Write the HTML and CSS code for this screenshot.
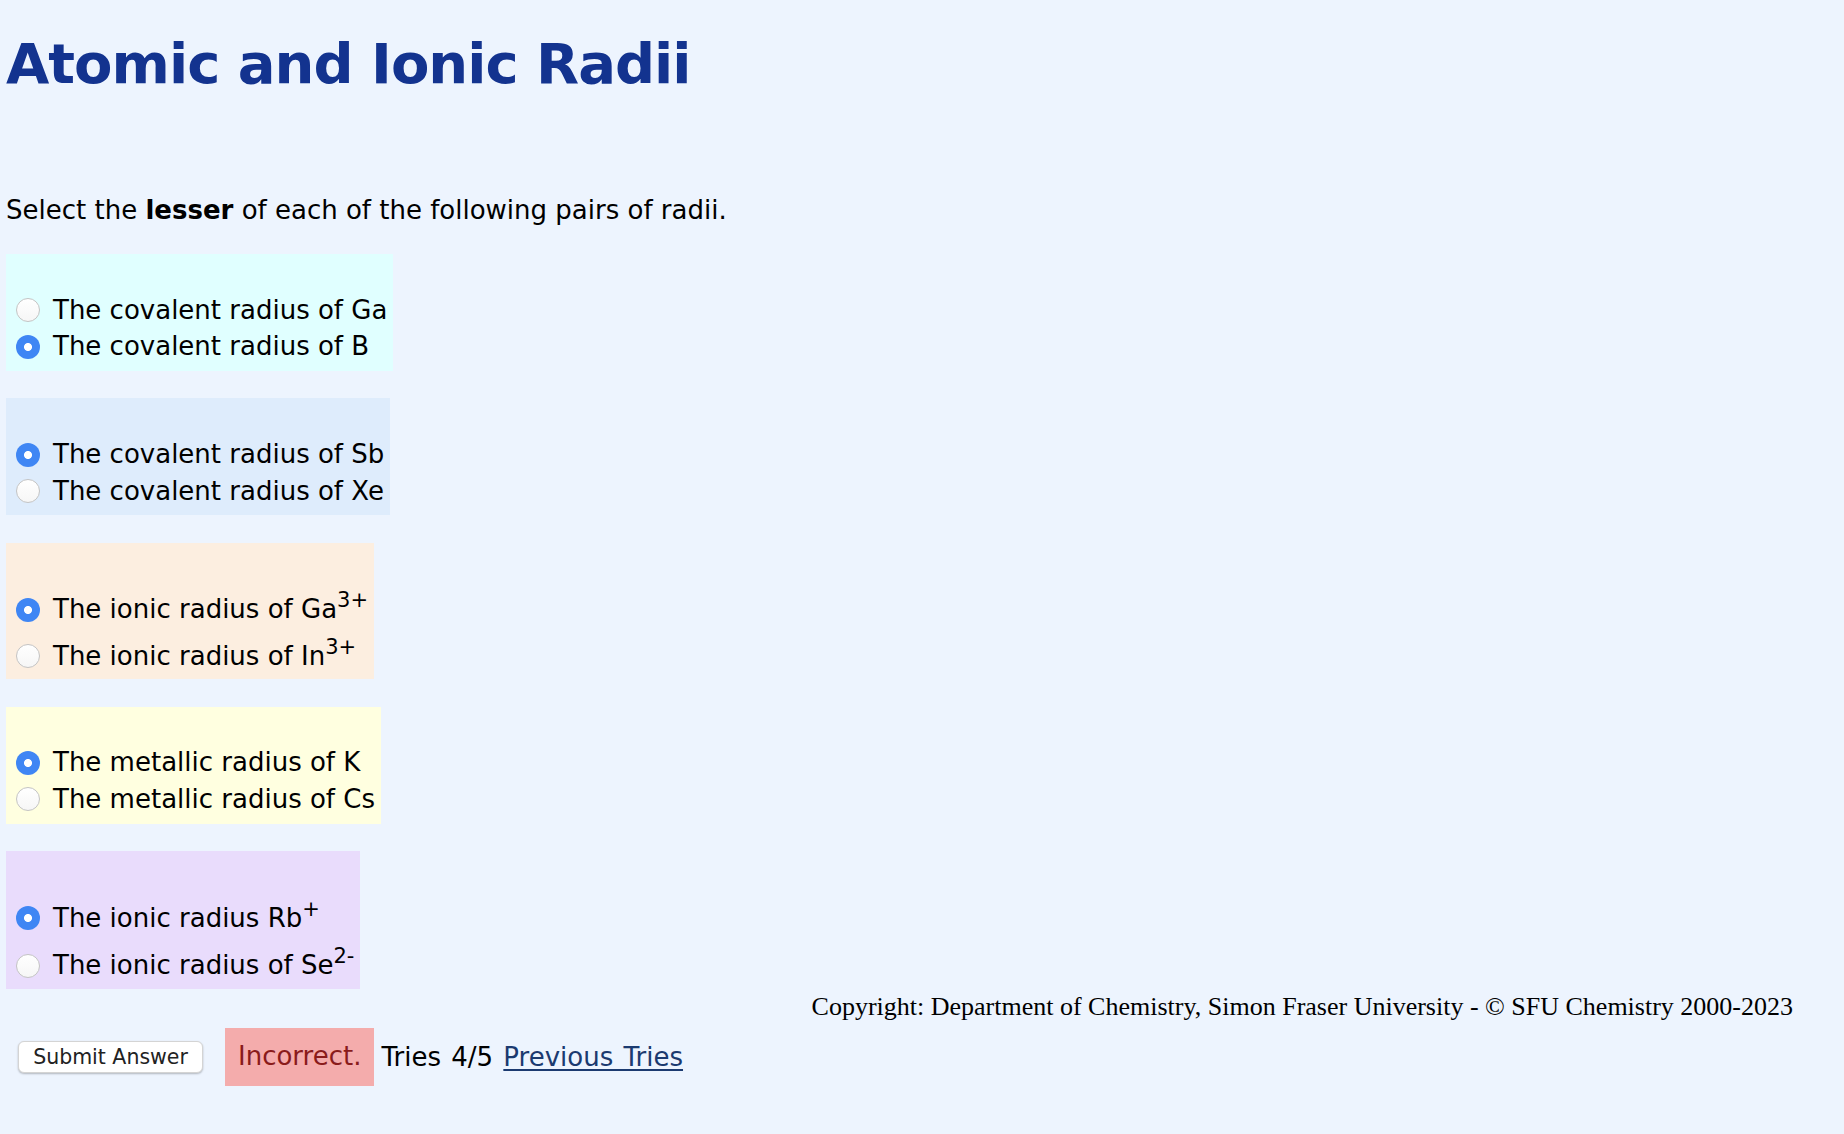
FILE: index.html
```html
<!DOCTYPE html>
<html lang="en">
<head>
<meta charset="utf-8">
<title>Atomic and Ionic Radii</title>
<link rel="stylesheet" href="styles.css">
</head>
<body>
<h1 class="title">Atomic and Ionic Radii</h1>
<p class="intro">Select the <b>lesser</b> of each of the following pairs of radii.</p>

<div class="questions">
  <div class="q q-cyan">
    <div class="spacer"></div>
    <label class="opt"><input type="radio" name="q1">The covalent radius of Ga</label>
    <label class="opt"><input type="radio" name="q1" checked>The covalent radius of B</label>
  </div>
  <div class="q q-blue">
    <div class="spacer"></div>
    <label class="opt"><input type="radio" name="q2" checked>The covalent radius of Sb</label>
    <label class="opt"><input type="radio" name="q2">The covalent radius of Xe</label>
  </div>
  <div class="q q-peach">
    <div class="spacer"></div>
    <label class="opt opt-sup"><input type="radio" name="q3" checked>The ionic radius of Ga<sup>3+</sup></label>
    <label class="opt opt-sup"><input type="radio" name="q3">The ionic radius of In<sup>3+</sup></label>
  </div>
  <div class="q q-yellow">
    <div class="spacer"></div>
    <label class="opt"><input type="radio" name="q4" checked>The metallic radius of K</label>
    <label class="opt"><input type="radio" name="q4">The metallic radius of Cs</label>
  </div>
  <div class="q q-lavender">
    <div class="spacer"></div>
    <label class="opt opt-sup"><input type="radio" name="q5" checked>The ionic radius Rb<sup>+</sup></label>
    <label class="opt opt-sup"><input type="radio" name="q5">The ionic radius of Se<sup>2-</sup></label>
  </div>
</div>

<div class="copyright">Copyright: Department of Chemistry, Simon Fraser University - © SFU Chemistry 2000-2023</div>

<div class="actions">
  <button class="submit" type="button">Submit Answer</button>
  <span class="incorrect">Incorrect.</span>
  <span class="tries">Tries 4/5 <a href="#" class="prev">Previous Tries</a></span>
</div>
</body>
</html>
```

FILE: styles.css
```css
html, body {
  margin: 0;
  background: #edf4fe;
}

body {
  padding: 0 6px;
  font-family: "DejaVu Sans", Verdana, sans-serif;
  font-size: 26px;
  color: #000;
}

.title {
  margin: 31px 0 0;
  font-size: 56px;
  line-height: 66px;
  font-weight: bold;
  letter-spacing: -1px;
  color: #13338f;
}

.intro {
  margin: 95px 0 0;
  line-height: 36.7px;
}

.questions {
  margin-top: 25.3px;
  display: flex;
  flex-direction: column;
  align-items: flex-start;
  gap: 27.3px;
}

.q {
  padding: 1px 6px 6px 0;
}

.q-cyan { background: #e0ffff; }
.q-blue { background: #deecfc; }
.q-peach { background: #fceee0; }
.q-yellow { background: #ffffe0; }
.q-lavender { background: #e9dcfc; }

.spacer {
  height: 36.7px;
}

.opt {
  display: block;
  line-height: 36.7px;
  white-space: nowrap;
}

.opt-sup {
  padding-top: 11px;
  height: 35.4px;
}

.q-lavender .opt-sup {
  height: 36.4px;
}

.opt sup {
  font-size: 21px;
  line-height: 0;
  vertical-align: baseline;
  position: relative;
  top: -11px;
}

.opt input {
  -webkit-appearance: none;
  appearance: none;
  width: 24px;
  height: 24px;
  margin: 0 13px 0 10px;
  border-radius: 50%;
  border: 1px solid #c4c4c4;
  background: linear-gradient(#ffffff, #f6f6f6);
  vertical-align: middle;
  box-sizing: border-box;
  position: relative;
  top: -1px;
}

.opt input:checked {
  border: none;
  background: radial-gradient(circle, #ffffff 0 3.6px, #3f86f4 4.4px);
}

.copyright {
  margin-top: 3px;
  padding-right: 45px;
  text-align: right;
  font-family: "Liberation Serif", "Times New Roman", serif;
  font-size: 26px;
  line-height: 30px;
}

.actions {
  margin-top: 6px;
  display: flex;
  align-items: center;
  white-space: nowrap;
}

.submit {
  margin-left: 12px;
  width: 185px;
  height: 32px;
  padding: 0;
  border: 1px solid #d4d4d4;
  border-radius: 6px;
  background: #ffffff;
  box-shadow: 0 1px 2px rgba(0, 0, 0, 0.25);
  font-family: "DejaVu Sans", Verdana, sans-serif;
  font-size: 20.5px;
  color: #222;
}

.incorrect {
  margin-left: 22px;
  padding: 13px 13px;
  line-height: 31.7px;
  background: #f4acac;
  color: #8a1b1b;
}

.tries {
  margin-left: 7px;
  word-spacing: 2px;
}

.prev {
  color: #1b3a70;
  text-decoration: underline;
  text-underline-offset: 3px;
}
```
